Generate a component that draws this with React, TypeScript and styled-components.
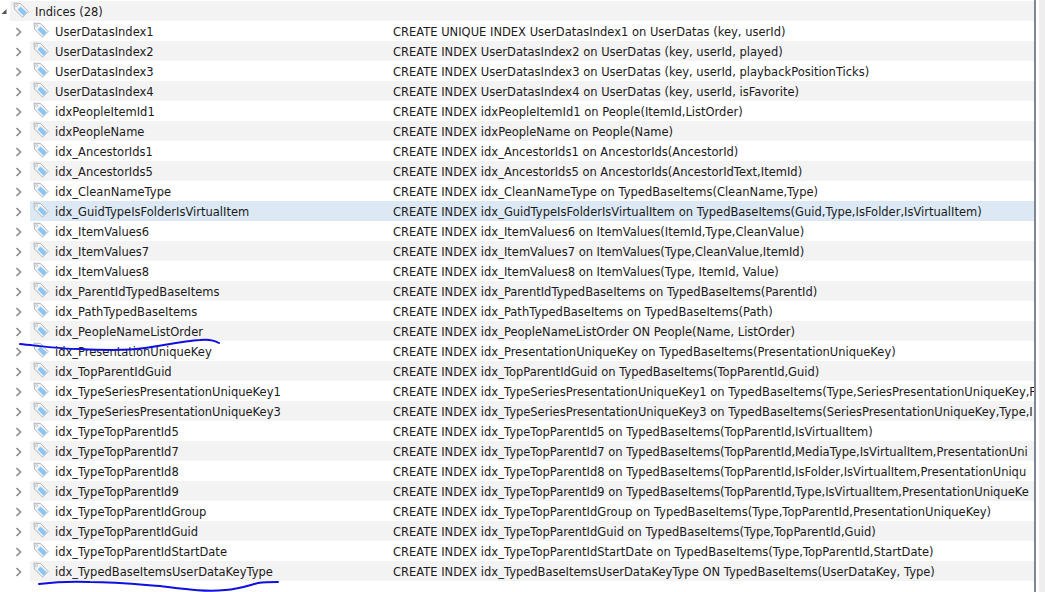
import React from "react";
import styled, { createGlobalStyle } from "styled-components";

const GlobalStyle = createGlobalStyle`
  html, body {
    margin: 0;
    padding: 0;
    background: #fff;
  }
`;

const Page = styled.div`
  position: relative;
  display: flex;
  width: 1045px;
  height: 592px;
  overflow: hidden;
  box-sizing: border-box;
  background: #fff;
  font-family: "DejaVu Sans", sans-serif;
  font-size: 11.5px;
  color: #1a1a1a;
`;

const Tree = styled.div`
  width: 1036px;
  flex: none;
  box-sizing: border-box;
  border-right: 2px solid #7f8890;
  padding-top: 1px;
  overflow: hidden;
`;

const Gutter = styled.div`
  width: 3px;
  flex: none;
  background: #fff;
`;

const Scrollbar = styled.div`
  flex: 1;
  background: #eeeeee;
`;

const Row = styled.div`
  display: flex;
  height: 20px;
`;

const Toggle = styled.div<{ $top?: boolean }>`
  flex: none;
  width: ${(p) => (p.$top ? 10 : 30)}px;
  box-sizing: border-box;
  display: flex;
  align-items: center;
  justify-content: flex-end;
  padding-top: 1px;
  padding-right: ${(p) => (p.$top ? 2 : 7)}px;
`;

const Body = styled.div<{ $shade: "none" | "grey" | "selected" }>`
  flex: 1;
  min-width: 0;
  display: flex;
  align-items: center;
  box-sizing: border-box;
  padding-top: 2px;
  white-space: nowrap;
  overflow: hidden;
  background: ${(p) =>
    p.$shade === "selected" ? "#dce9f4" : p.$shade === "grey" ? "#f3f3f3" : "#fff"};
`;

const Name = styled.div<{ $top?: boolean }>`
  flex: none;
  width: ${(p) => (p.$top ? 383 : 363)}px;
  display: flex;
  align-items: center;
  gap: 6px;
  padding-left: 3px;
  box-sizing: border-box;
`;

const Sql = styled.div`
  flex: none;
`;

const Ink = styled.svg`
  position: absolute;
  left: 0;
  top: 0;
  pointer-events: none;
`;

function Chevron() {
  return (
    <svg width="8" height="10" viewBox="0 0 8 10" fill="none">
      <path d="M1.5 1 L5.5 5 L1.5 9" stroke="#8f8f8f" strokeWidth="1.7" />
    </svg>
  );
}

function OpenArrow() {
  return (
    <svg width="7" height="7" viewBox="0 0 7 7" fill="none">
      <path d="M0.5 6 L5.5 6 L5.5 1 Z" fill="#555" />
    </svg>
  );
}

function TagIcon() {
  return (
    <svg width="16" height="16" viewBox="0 0 16 16" fill="none" style={{ flex: "none", marginTop: -4 }}>
      <path
        d="M1 1 L7.5 1.5 L15.2 9.5 L9.5 15.2 L1.5 7 Z"
        fill="#f6f6f6"
        stroke="#aeb4ba"
        strokeWidth="1"
        strokeLinejoin="round"
      />
      <path d="M7.5 4.5 L13.8 10.3 L10.5 13.8 L4.5 7.5 Z" fill="#8cc4f2" />
      <circle cx="3.6" cy="3.6" r="1.1" fill="#fff" stroke="#a8aeb4" strokeWidth="0.7" />
    </svg>
  );
}

const indices: [string, string][] = [
  ["UserDatasIndex1", "CREATE UNIQUE INDEX UserDatasIndex1 on UserDatas (key, userId)"],
  ["UserDatasIndex2", "CREATE INDEX UserDatasIndex2 on UserDatas (key, userId, played)"],
  ["UserDatasIndex3", "CREATE INDEX UserDatasIndex3 on UserDatas (key, userId, playbackPositionTicks)"],
  ["UserDatasIndex4", "CREATE INDEX UserDatasIndex4 on UserDatas (key, userId, isFavorite)"],
  ["idxPeopleItemId1", "CREATE INDEX idxPeopleItemId1 on People(ItemId,ListOrder)"],
  ["idxPeopleName", "CREATE INDEX idxPeopleName on People(Name)"],
  ["idx_AncestorIds1", "CREATE INDEX idx_AncestorIds1 on AncestorIds(AncestorId)"],
  ["idx_AncestorIds5", "CREATE INDEX idx_AncestorIds5 on AncestorIds(AncestorIdText,ItemId)"],
  ["idx_CleanNameType", "CREATE INDEX idx_CleanNameType on TypedBaseItems(CleanName,Type)"],
  ["idx_GuidTypeIsFolderIsVirtualItem", "CREATE INDEX idx_GuidTypeIsFolderIsVirtualItem on TypedBaseItems(Guid,Type,IsFolder,IsVirtualItem)"],
  ["idx_ItemValues6", "CREATE INDEX idx_ItemValues6 on ItemValues(ItemId,Type,CleanValue)"],
  ["idx_ItemValues7", "CREATE INDEX idx_ItemValues7 on ItemValues(Type,CleanValue,ItemId)"],
  ["idx_ItemValues8", "CREATE INDEX idx_ItemValues8 on ItemValues(Type, ItemId, Value)"],
  ["idx_ParentIdTypedBaseItems", "CREATE INDEX idx_ParentIdTypedBaseItems on TypedBaseItems(ParentId)"],
  ["idx_PathTypedBaseItems", "CREATE INDEX idx_PathTypedBaseItems on TypedBaseItems(Path)"],
  ["idx_PeopleNameListOrder", "CREATE INDEX idx_PeopleNameListOrder ON People(Name, ListOrder)"],
  ["idx_PresentationUniqueKey", "CREATE INDEX idx_PresentationUniqueKey on TypedBaseItems(PresentationUniqueKey)"],
  ["idx_TopParentIdGuid", "CREATE INDEX idx_TopParentIdGuid on TypedBaseItems(TopParentId,Guid)"],
  ["idx_TypeSeriesPresentationUniqueKey1", "CREATE INDEX idx_TypeSeriesPresentationUniqueKey1 on TypedBaseItems(Type,SeriesPresentationUniqueKey,F"],
  ["idx_TypeSeriesPresentationUniqueKey3", "CREATE INDEX idx_TypeSeriesPresentationUniqueKey3 on TypedBaseItems(SeriesPresentationUniqueKey,Type,I"],
  ["idx_TypeTopParentId5", "CREATE INDEX idx_TypeTopParentId5 on TypedBaseItems(TopParentId,IsVirtualItem)"],
  ["idx_TypeTopParentId7", "CREATE INDEX idx_TypeTopParentId7 on TypedBaseItems(TopParentId,MediaType,IsVirtualItem,PresentationUni"],
  ["idx_TypeTopParentId8", "CREATE INDEX idx_TypeTopParentId8 on TypedBaseItems(TopParentId,IsFolder,IsVirtualItem,PresentationUniqu"],
  ["idx_TypeTopParentId9", "CREATE INDEX idx_TypeTopParentId9 on TypedBaseItems(TopParentId,Type,IsVirtualItem,PresentationUniqueKe"],
  ["idx_TypeTopParentIdGroup", "CREATE INDEX idx_TypeTopParentIdGroup on TypedBaseItems(Type,TopParentId,PresentationUniqueKey)"],
  ["idx_TypeTopParentIdGuid", "CREATE INDEX idx_TypeTopParentIdGuid on TypedBaseItems(Type,TopParentId,Guid)"],
  ["idx_TypeTopParentIdStartDate", "CREATE INDEX idx_TypeTopParentIdStartDate on TypedBaseItems(Type,TopParentId,StartDate)"],
  ["idx_TypedBaseItemsUserDataKeyType", "CREATE INDEX idx_TypedBaseItemsUserDataKeyType ON TypedBaseItems(UserDataKey, Type)"],
];

function App() {
  return (
    <>
      <GlobalStyle />
      <Page>
        <Tree>
          <Row>
            <Toggle $top>
              <OpenArrow />
            </Toggle>
            <Body $shade="grey">
              <Name $top>
                <TagIcon />
                <span>Indices (28)</span>
              </Name>
            </Body>
          </Row>
          {indices.map(([name, sql], i) => (
            <Row key={name}>
              <Toggle>
                <Chevron />
              </Toggle>
              <Body $shade={name === "idx_GuidTypeIsFolderIsVirtualItem" ? "selected" : i % 2 === 1 ? "grey" : "none"}>
                <Name>
                  <TagIcon />
                  <span>{name}</span>
                </Name>
                <Sql>{sql}</Sql>
              </Body>
            </Row>
          ))}
        </Tree>
        <Gutter />
        <Scrollbar />
        <Ink width="1045" height="592" viewBox="0 0 1045 592" fill="none">
          <path
            d="M20 344 C40 346 60 349 80 349 C100 350 125 351 145 348 C165 345 185 341 200 340 C208 339 214 340 219 343"
            stroke="#0f0fe0"
            strokeWidth="2"
            strokeLinecap="round"
          />
          <path
            d="M39 584 C55 582 70 581 90 582 C115 582 135 584 160 586 C185 589 205 592 225 590 C240 589 250 585 258 583 C265 582 272 582 278 582"
            stroke="#0f0fe0"
            strokeWidth="2"
            strokeLinecap="round"
          />
        </Ink>
      </Page>
    </>
  );
}

export default App;
